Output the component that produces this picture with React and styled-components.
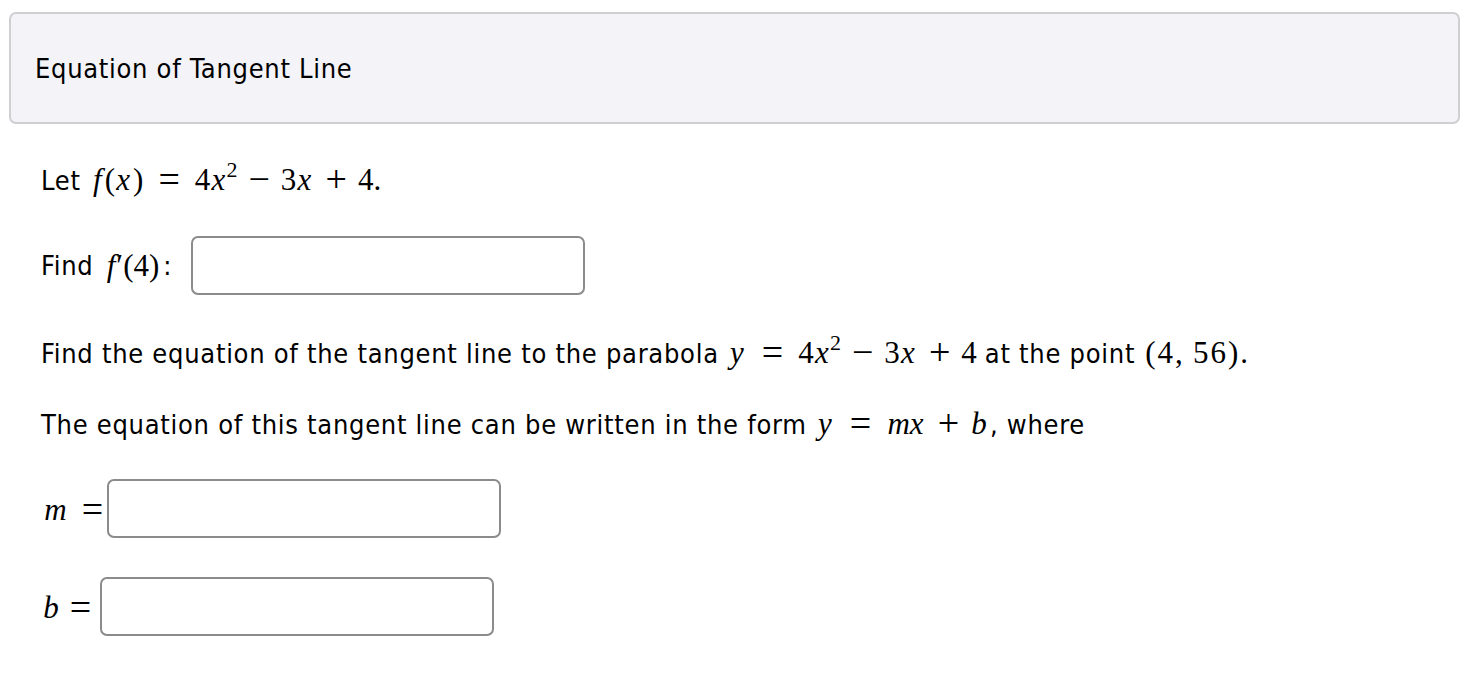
import styled, { createGlobalStyle } from 'styled-components';

const Global = createGlobalStyle`
  html, body {
    margin: 0;
    padding: 0;
    background: #ffffff;
  }
  body {
    font-family: "DejaVu Sans Condensed", "DejaVu Sans", sans-serif;
    font-stretch: condensed;
    color: #000;
  }
`;

const Page = styled.div`
  padding: 12px 13px 0 9px;
`;

const Header = styled.div`
  height: 112px;
  box-sizing: border-box;
  border: 2px solid #cfcfd2;
  border-radius: 7px;
  background: #f3f3f8;
  display: flex;
  align-items: center;
  padding: 0 24px;
`;

const Title = styled.h1`
  margin: 0;
  font-size: 27px;
  font-weight: normal;
  letter-spacing: 0.7px;
`;

const Content = styled.div`
  display: flex;
  flex-direction: column;
  padding: 36px 0 0 32px;
`;

const Line = styled.p`
  margin: ${({ $mt }) => $mt ?? 0}px 0 0;
  height: 36px;
  font-size: 27px;
  line-height: 36px;
  letter-spacing: 0.72px;
  white-space: nowrap;
`;

const Row = styled.div`
  display: flex;
  align-items: center;
  margin-top: ${({ $mt }) => $mt ?? 0}px;
  height: 59px;
  font-size: 27px;
  letter-spacing: 0.7px;
  white-space: nowrap;
`;

const Math = styled.span`
  font-family: "Liberation Serif", "DejaVu Serif", serif;
  font-size: 31px;
  font-stretch: normal;
  letter-spacing: ${({ $ls }) => $ls ?? 0}px;
  line-height: 1;
  white-space: nowrap;
  margin: 0 ${({ $mr }) => $mr ?? 0}px 0 ${({ $ml }) => $ml ?? 0}px;
`;

const V = styled.i`
  font-style: italic;
  margin: 0 0.1em 0 0.04em;
`;

const Op = styled.span`
  display: inline-block;
  font-size: 38px;
  line-height: 1;
  vertical-align: -2px;
  margin-left: ${({ $rel, $before }) => $before ?? ($rel ? 15 : 11)}px;
  margin-right: ${({ $rel, $after }) => $after ?? ($rel ? 15 : 11)}px;
`;

const Prime = styled.span`
  margin: 0 0 0 -2px;
`;

const Colon = styled.span`
  margin-left: 4px;
`;

const Sup = styled.span`
  display: inline-block;
  font-size: 22px;
  line-height: 0;
  vertical-align: 13px;
  margin-left: -2px;
`;

const Input = styled.input`
  box-sizing: border-box;
  width: 394px;
  height: 59px;
  border: 2px solid #8b8b8b;
  border-radius: 7px;
  background: #fff;
  margin-left: ${({ $ml }) => $ml ?? 0}px;
  outline: none;
  flex-shrink: 0;
`;

export default function App() {
  return (
    <Page>
      <Global />
      <Header>
        <Title>Equation of Tangent Line</Title>
      </Header>
      <Content>
        <Line>
          Let
          <Math $ml={11}>
            <V>f</V>(<V>x</V>)<Op $rel>=</Op>4<V>x</V>
            <Sup>2</Sup>
            <Op>−</Op>3<V>x</V>
            <Op>+</Op>4.
          </Math>
        </Line>
        <Row $mt={40}>
          Find
          <Math $ml={12}>
            <V>f</V>
            <Prime>′</Prime>(4)
          </Math>
          <Colon>:</Colon>
          <Input $ml={19} />
        </Row>
        <Line $mt={38}>
          Find the equation of the tangent line to the parabola
          <Math $ml={10} $mr={8}>
            <V>y</V>
            <Op $rel>=</Op>4<V>x</V>
            <Sup>2</Sup>
            <Op>−</Op>3<V>x</V>
            <Op>+</Op>4
          </Math>
          at the point
          <Math $ml={10} $ls={2}>
            (4,&thinsp;56).
          </Math>
        </Line>
        <Line $mt={35}>
          The equation of this tangent line can be written in the form
          <Math $ml={10}>
            <V>y</V>
            <Op $rel>=</Op>
            <V>mx</V>
            <Op>+</Op>
            <V>b</V>
          </Math>
          , where
        </Line>
        <Row $mt={39}>
          <Math $ml={2}>
            <V>m</V>
            <Op $rel $before={12} $after={4}>=</Op>
          </Math>
          <Input />
        </Row>
        <Row $mt={39}>
          <Math $ml={1}>
            <V>b</V>
            <Op $rel $before={8} $after={9}>=</Op>
          </Math>
          <Input />
        </Row>
      </Content>
    </Page>
  );
}
